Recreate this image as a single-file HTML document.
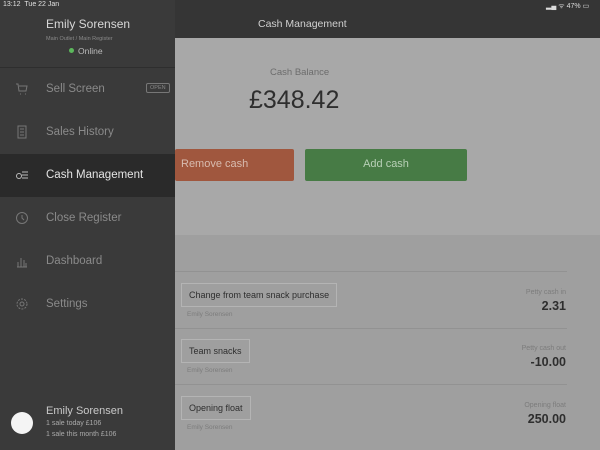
<!DOCTYPE html>
<html><head><meta charset="utf-8"><style>
*{margin:0;padding:0;box-sizing:border-box}
body{width:600px;height:450px;overflow:hidden;font-family:"Liberation Sans",sans-serif;background:#a0a0a0;position:relative}
.abs{position:absolute}
.topbar{left:0;top:0;width:600px;height:38px;background:#353535}
.side{left:0;top:0;width:175px;height:450px;background:#3a3a3a}
.item{position:absolute;left:0;width:175px;height:43px;color:#8a8a8a;font-size:11.5px}
.item span{position:absolute;left:46px;top:15px}
.item svg{position:absolute;left:15px;top:14px}
.row .tag{position:absolute;left:181px;height:24px;border:1px solid #b4b4b4;color:#2e2e2e;font-size:9px;padding:0 7px;line-height:22px}
.who{position:absolute;left:187px;font-size:6.5px;color:#7c7c7c}
.lbl{position:absolute;right:34px;font-size:7px;color:#7c7c7c;text-align:right}
.amt{position:absolute;right:34px;font-size:12.5px;color:#2e2e2e;font-weight:bold;text-align:right}
.line{position:absolute;left:175px;width:392px;height:1px;background:#929292}
</style></head><body>
<div class="abs" style="left:175px;top:38px;width:425px;height:197px;background:#a8a8a8"></div>
<div class="abs" style="left:175px;top:235px;width:425px;height:215px;background:#9f9f9f"></div>
<div class="abs topbar"></div>
<div class="abs" style="left:258px;top:18px;color:#d0d0d0;font-size:10.5px">Cash Management</div>
<div class="abs" style="left:546px;top:2px;color:#ddd;font-size:7px">▂▄ ᯤ 47% ▭</div>
<div class="abs" style="left:270px;top:67px;color:#6c6c6c;font-size:9.5px">Cash Balance</div>
<div class="abs" style="left:249px;top:86px;color:#2e2e2e;font-size:25px">£348.42</div>
<div class="abs" style="left:175px;top:149px;width:119px;height:32px;background:#a0573e;border-radius:2px;color:#d8bcb0;font-size:11px;padding:9px 0 0 6px">Remove cash</div>
<div class="abs" style="left:305px;top:149px;width:162px;height:32px;background:#477b45;border-radius:2px;color:#b8d0b6;font-size:11px;text-align:center;padding-top:9px">Add cash</div>
<div class="line" style="top:271px"></div>
<div class="line" style="top:328px"></div>
<div class="line" style="top:384px"></div>
<div class="row">
<div class="tag" style="top:283px">Change from team snack purchase</div><div class="who" style="top:311px">Emily Sorensen</div>
<div class="lbl" style="top:289px">Petty cash in</div><div class="amt" style="top:299px">2.31</div>
<div class="tag" style="top:339px">Team snacks</div><div class="who" style="top:367px">Emily Sorensen</div>
<div class="lbl" style="top:345px">Petty cash out</div><div class="amt" style="top:355px">-10.00</div>
<div class="tag" style="top:396px">Opening float</div><div class="who" style="top:424px">Emily Sorensen</div>
<div class="lbl" style="top:402px">Opening float</div><div class="amt" style="top:412px">250.00</div>
</div>
<div class="abs side"></div>
<div class="abs" style="left:3px;top:1px;color:#e0e0e0;font-size:7px">13:12 &nbsp;Tue 22 Jan</div>
<div class="abs" style="left:46px;top:17px;color:#d8d8d8;font-size:12px">Emily Sorensen</div>
<div class="abs" style="left:46px;top:36px;color:#8a8a8a;font-size:5.5px">Main Outlet / Main Register</div>
<div class="abs" style="left:69px;top:48px;width:5px;height:5px;border-radius:50%;background:#5cb85c"></div>
<div class="abs" style="left:78px;top:46px;color:#bbb;font-size:8.5px">Online</div>
<div class="abs" style="left:0;top:67px;width:175px;height:1px;background:#2e2e2e"></div>
<div class="item" style="top:68px"><svg width="14" height="14" viewBox="0 0 14 14" fill="none" stroke="#777"><path d="M1 2h2l1 7h7l1-5H4M5 12h1M10 12h1"/></svg><span>Sell Screen</span>
<div style="position:absolute;left:146px;top:15px;border:1px solid #777;border-radius:2px;font-size:5.5px;padding:1px 3px;color:#888">OPEN</div></div>
<div class="item" style="top:111px"><svg width="14" height="14" viewBox="0 0 14 14" fill="none" stroke="#777"><path d="M3 1h8v12H3zM5 4h4M5 7h4M5 10h4"/></svg><span>Sales History</span></div>
<div class="item" style="top:154px;background:#2a2a2a;color:#e4e4e4"><svg width="14" height="14" viewBox="0 0 14 14" fill="none" stroke="#bbb"><circle cx="4" cy="8" r="2.5"/><path d="M7 4h6M7 7h6M7 10h6"/></svg><span>Cash Management</span></div>
<div class="item" style="top:197px"><svg width="14" height="14" viewBox="0 0 14 14" fill="none" stroke="#777"><circle cx="7" cy="7" r="5.5"/><path d="M7 4v3l2 2"/></svg><span>Close Register</span></div>
<div class="item" style="top:240px"><svg width="14" height="14" viewBox="0 0 14 14" fill="none" stroke="#777"><path d="M2 13h10M3 13V8M6 13V4M9 13V6M11 13V9"/></svg><span>Dashboard</span></div>
<div class="item" style="top:283px"><svg width="14" height="14" viewBox="0 0 14 14" fill="none" stroke="#777"><circle cx="7" cy="7" r="2"/><circle cx="7" cy="7" r="5" stroke-dasharray="2 1.2"/></svg><span>Settings</span></div>
<div class="abs" style="left:11px;top:412px;width:22px;height:22px;border-radius:50%;background:#f4f4f4"></div>
<div class="abs" style="left:46px;top:405px;color:#c8c8c8;font-size:11px">Emily Sorensen</div>
<div class="abs" style="left:46px;top:420px;color:#aaa;font-size:7px">1 sale today £106</div>
<div class="abs" style="left:46px;top:431px;color:#aaa;font-size:7px">1 sale this month £106</div>
</body></html>
